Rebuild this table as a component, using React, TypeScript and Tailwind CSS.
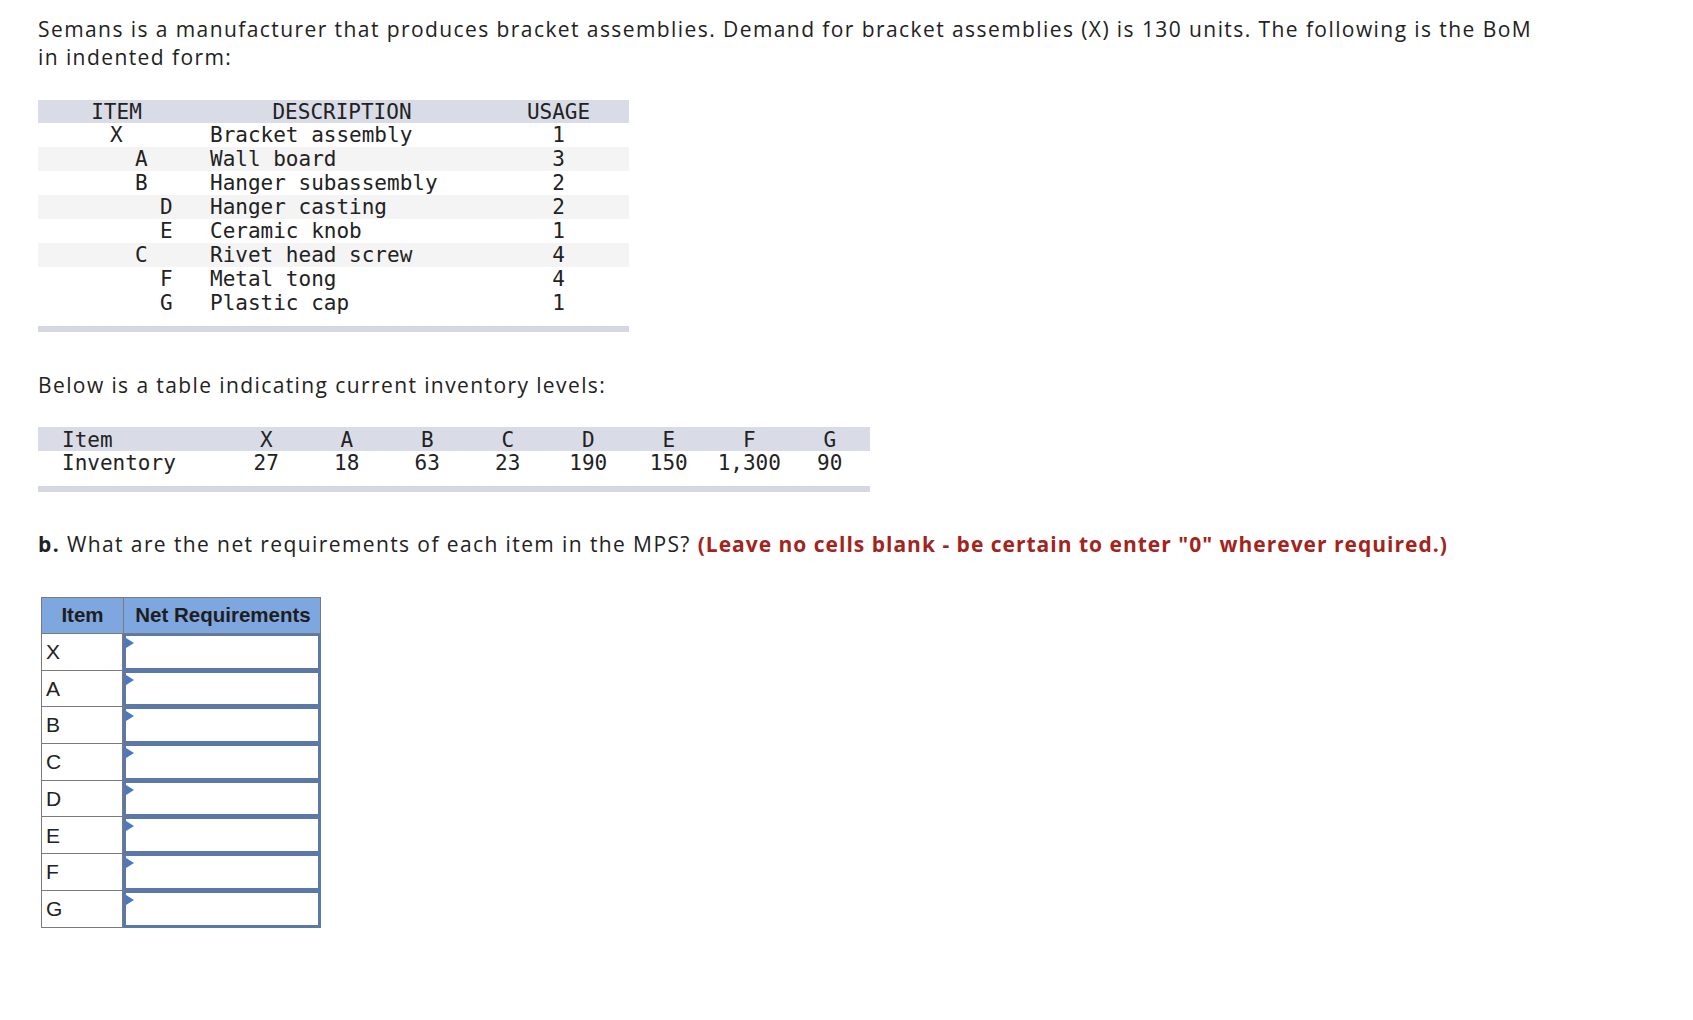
import React from "react";

const bom = [
  { item: "X", level: 0, desc: "Bracket assembly", usage: 1, shade: false },
  { item: "A", level: 1, desc: "Wall board", usage: 3, shade: true },
  { item: "B", level: 1, desc: "Hanger subassembly", usage: 2, shade: false },
  { item: "D", level: 2, desc: "Hanger casting", usage: 2, shade: true },
  { item: "E", level: 2, desc: "Ceramic knob", usage: 1, shade: false },
  { item: "C", level: 1, desc: "Rivet head screw", usage: 4, shade: true },
  { item: "F", level: 2, desc: "Metal tong", usage: 4, shade: false },
  { item: "G", level: 2, desc: "Plastic cap", usage: 1, shade: false },
];

const inventory = [
  ["X", "27"],
  ["A", "18"],
  ["B", "63"],
  ["C", "23"],
  ["D", "190"],
  ["E", "150"],
  ["F", "1,300"],
  ["G", "90"],
];

const indent = ["pl-[72px]", "pl-[97px]", "pl-[122px]"];

function AnswerRow({ item }: { item: string }) {
  return (
    <div className="grid h-[36.7px] grid-cols-[82px_198px]">
      <div className="flex items-center border-b border-l border-r border-[#7a7a7a] pl-[4px] text-[21px] text-[#222]">
        {item}
      </div>
      <div className="relative border-x-[3px] border-t-2 border-b-[3px] border-[#5b78a8] bg-white">
        <span className="absolute left-0 top-[2px] h-0 w-0 border-y-[5px] border-l-[8px] border-y-transparent border-l-[#4a78c2]" />
      </div>
    </div>
  );
}

export default function App() {
  return (
    <div className="min-h-screen bg-white pl-[38px] pt-[15px] font-['Open_Sans',sans-serif] text-[#222]">
      <p className="text-[21px] leading-[28px] tracking-[1.42px]">
        Semans is a manufacturer that produces bracket assemblies. Demand for bracket assemblies (X) is 130 units. The
        following is the BoM
        <br />
        in indented form:
      </p>

      <div className="mt-[29px] w-[591px] font-['DejaVu_Sans_Mono',monospace] text-[21px] text-[#222]">
        <div className="grid h-[23px] grid-cols-[172px_278px_141px] items-center bg-[#d9dce6] pt-[1px] leading-[23px]">
          <div className="pr-[15px] text-center">ITEM</div>
          <div className="pr-[14px] text-center">DESCRIPTION</div>
          <div className="text-center">USAGE</div>
        </div>
        {bom.map((r) => (
          <div
            key={r.item}
            className={`grid h-[24px] grid-cols-[172px_278px_141px] items-center leading-[24px] ${
              r.shade ? "bg-[#f4f4f5]" : "bg-white"
            }`}
          >
            <div className={indent[r.level]}>{r.item}</div>
            <div className="whitespace-pre">{r.desc}</div>
            <div className="text-center">{r.usage}</div>
          </div>
        ))}
        <div className="mt-[11px] h-[6px] bg-[#d5d8e0]" />
      </div>

      <p className="mt-[39px] text-[21px] leading-[28px] tracking-[1.4px]">
        Below is a table indicating current inventory levels:
      </p>

      <div className="mt-[28px] w-[832px] font-['DejaVu_Sans_Mono',monospace] text-[21px] text-[#222]">
        <div className="grid h-[24px] grid-cols-[188px_repeat(8,80.5px)] items-center bg-[#d9dce6] pt-[1px] leading-[24px]">
          <div className="pl-[24px]">Item</div>
          {inventory.map(([k]) => (
            <div key={k} className="text-center">
              {k}
            </div>
          ))}
        </div>
        <div className="grid h-[24px] grid-cols-[188px_repeat(8,80.5px)] items-center leading-[24px]">
          <div className="pl-[24px]">Inventory</div>
          {inventory.map(([k, v]) => (
            <div key={k} className="text-center">
              {v}
            </div>
          ))}
        </div>
        <div className="mt-[11px] h-[6px] bg-[#d5d8e0]" />
      </div>

      <p className="mt-[38px] text-[21px] leading-[28px] tracking-[1.4px]">
        <span className="font-bold">b.</span> What are the net requirements of each item in the MPS?{" "}
        <span className="font-bold tracking-[1px] text-[#a3241c]">
          (Leave no cells blank - be certain to enter "0" wherever required.)
        </span>
      </p>

      <div className="ml-[3px] mt-[39px] w-[280px] font-['Liberation_Sans',Arial,sans-serif]">
        <div className="grid h-[37px] grid-cols-[82px_198px] border border-[#7a7a7a] bg-[#7ea6df] text-[20.5px] font-bold text-[#1e1e1e]">
          <div className="flex items-center justify-center border-r border-[#7a7a7a]">Item</div>
          <div className="flex items-center justify-center">Net Requirements</div>
        </div>
        {inventory.map(([k]) => (
          <AnswerRow key={k} item={k} />
        ))}
      </div>
    </div>
  );
}
